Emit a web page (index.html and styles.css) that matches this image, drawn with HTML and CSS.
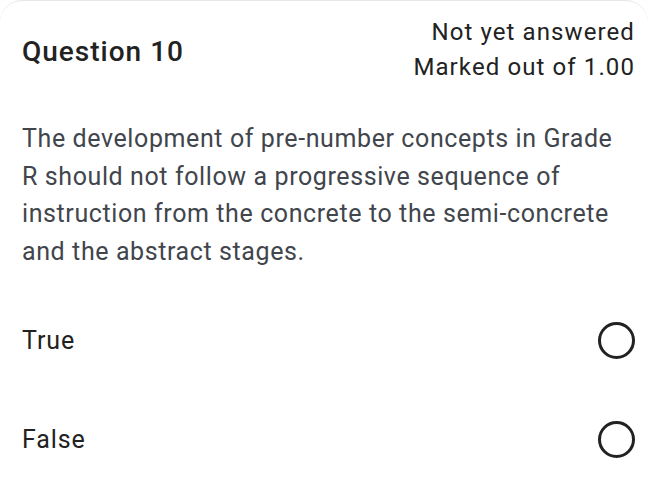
FILE: index.html
```html
<!DOCTYPE html>
<html lang="en">
<head>
<meta charset="utf-8">
<link rel="stylesheet" href="styles.css">
</head>
<body>
<div class="card">
  <div class="header">
    <h2 class="qno">Question 10</h2>
    <div class="status">
      <div>Not yet answered</div>
      <div>Marked out of 1.00</div>
    </div>
  </div>
  <p class="qtext">The development of pre-number concepts in Grade R should not follow a progressive sequence of instruction from the concrete to the semi-concrete and the abstract stages.</p>
  <div class="options">
    <label class="option"><span class="label">True</span><span class="radio"></span></label>
    <label class="option"><span class="label">False</span><span class="radio"></span></label>
  </div>
</div>
</body>
</html>
```
FILE: styles.css
```css
html, body {
  margin: 0;
  padding: 0;
  background: #ffffff;
}
body {
  font-family: Roboto, "Noto Sans", sans-serif;
  width: 648px;
  height: 485px;
  overflow: hidden;
}
.card {
  border-top: 1px solid #e6e6e6;
  border-radius: 22px 22px 0 0;
  padding: 0 13px 0 22px;
  height: 485px;
  box-sizing: border-box;
}
.header {
  display: flex;
  justify-content: space-between;
  align-items: center;
  padding-top: 14px;
}
.qno {
  margin: 0;
  font-size: 28px;
  font-weight: 500;
  letter-spacing: 1px;
  color: #222222;
  position: relative;
  top: 1px;
}
.status {
  text-align: right;
  font-size: 24px;
  letter-spacing: 1.1px;
  line-height: 35px;
  color: #222222;
}
.qtext {
  margin: 35px 0 0 0;
  font-size: 25px;
  letter-spacing: 0.6px;
  line-height: 37.7px;
  color: #41454c;
}
.options {
  margin-top: 51px;
  display: flex;
  flex-direction: column;
  gap: 62px;
}
.option {
  display: flex;
  justify-content: space-between;
  align-items: center;
  font-size: 25px;
  letter-spacing: 0.9px;
  color: #222222;
}
.radio {
  width: 31px;
  height: 31px;
  border: 3px solid #222222;
  border-radius: 50%;
}
```
